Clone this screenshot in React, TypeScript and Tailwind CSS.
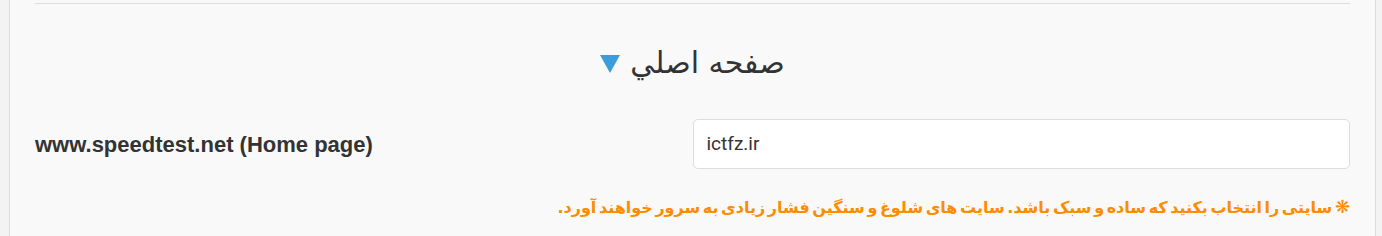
import React from "react";

export default function App() {
  return (
    <div className="h-[236px] w-[1382px] overflow-hidden bg-[#f3f3f3] pl-[9px] pr-[6px]">
      <div className="h-full border-x border-[#dcdcdc] bg-[#f9f9f9] px-[25px]">
        <div className="pt-[3px]">
          <div className="h-px bg-[#dddddd]" />
        </div>
        <div
          className="mt-[39px] flex h-[40px] items-center justify-center gap-[10px] text-[30px] text-[#333333]"
          style={{ fontFamily: '"DejaVu Sans", "Noto Sans", sans-serif' }}
        >
          <svg width="20" height="18" viewBox="0 0 20 18" className="mt-[2px]">
            <polygon points="0,0 20,0 10,18" fill="#3b9ddd" />
          </svg>
          <span dir="rtl" className="leading-none">صفحه اصلي</span>
        </div>
        <div className="mt-[36px] flex items-center">
          <div
            className="w-1/2 text-[22px] font-bold text-[#333333]"
            style={{ fontFamily: '"Liberation Sans", Arial, sans-serif' }}
          >
            www.speedtest.net (Home page)
          </div>
          <div className="w-1/2">
            <div
              className="flex h-[50px] items-center rounded-[5px] border border-[#dddddd] bg-white px-[13px] text-[19px] text-[#333333]"
              style={{ fontFamily: 'Roboto, "Liberation Sans", sans-serif' }}
            >
              ictfz.ir
            </div>
          </div>
        </div>
        <div
          dir="rtl"
          className="mt-[26px] text-[16px] leading-[24px] font-bold text-[#ff8c00] [word-spacing:-3px]"
          style={{ fontFamily: '"DejaVu Sans", sans-serif' }}
        >
          <span className="text-[18px]">❋</span> سایتی را انتخاب بکنید که ساده و سبک باشد. سایت های شلوغ و سنگین فشار زیادی به سرور خواهند آورد.
        </div>
      </div>
    </div>
  );
}
